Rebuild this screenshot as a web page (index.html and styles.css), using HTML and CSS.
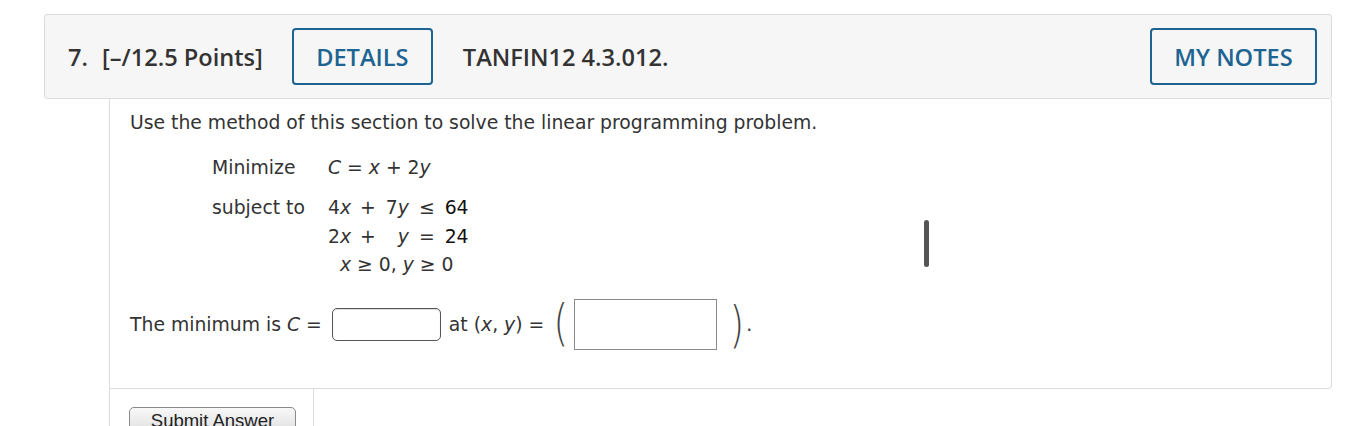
FILE: index.html
```html
<!DOCTYPE html>
<html>
<head>
<meta charset="utf-8">
<link rel="stylesheet" href="styles.css">
</head>
<body>
<div class="question">
  <div class="q-header">
    <div class="q-title"><span class="q-num">7.</span><span>[–/12.5 Points]</span></div>
    <button class="btn-outline details">DETAILS</button>
    <div class="q-code">TANFIN12 4.3.012.</div>
    <div class="spacer"></div>
    <button class="btn-outline notes">MY NOTES</button>
  </div>
  <div class="q-body">
    <p class="intro">Use the method of this section to solve the linear programming problem.</p>
    <table class="lp">
      <tr class="row-min">
        <td class="lbl">Minimize</td>
        <td><i>C</i> = <i>x</i> + 2<i>y</i></td>
      </tr>
      <tr class="row-st">
        <td class="lbl">subject to</td>
        <td>
          <table class="cons">
            <tr><td>4<i>x</i></td><td class="op">+</td><td class="r">7<i>y</i></td><td class="op">≤</td><td class="num">64</td></tr>
            <tr><td>2<i>x</i></td><td class="op">+</td><td class="r"><i>y</i></td><td class="op">=</td><td class="num">24</td></tr>
            <tr><td colspan="5" class="nonneg"><i>x</i> ≥ 0, <i>y</i> ≥ 0</td></tr>
          </table>
        </td>
      </tr>
    </table>
    <div class="answer">
      <span>The minimum is <i>C</i> =</span>
      <span class="box1"></span>
      <span>at (<i>x</i>, <i>y</i>) =</span>
      <span class="paren lp-open">(</span>
      <span class="box2"></span>
      <span class="paren">)</span><span class="dot">.</span>
    </div>
    <div class="cursor"></div>
  </div>
  <div class="q-footer">
    <div class="submit-cell"><button class="submit">Submit Answer</button></div>
  </div>
</div>
</body>
</html>
```
FILE: styles.css
```css
html, body { margin: 0; padding: 0; background: #fff; }
body { padding: 14px 24px 0 44px; overflow: hidden; height: 426px; box-sizing: border-box; }
.question { width: 1288px; }
.q-header {
  display: flex; align-items: center;
  height: 85px; box-sizing: border-box;
  background: #f6f6f6; border: 1px solid #dcdcdc; border-radius: 3px;
  padding: 0 14px 0 23px;
  font-family: "Open Sans", sans-serif; font-weight: 600; font-size: 23.6px; color: #333;
}
.q-title { display: flex; gap: 14px; }
.btn-outline {
  font-family: "Open Sans", sans-serif; font-weight: 600; font-size: 23.6px;
  color: #1d6493; background: #fff0; border: 2px solid #1d6493; border-radius: 4px;
  height: 57px; box-sizing: border-box; padding: 0;
}
.details { margin-left: 29px; width: 141px; }
.q-code { margin-left: 30px; }
.spacer { flex: 1; }
.notes { width: 167px; }
.q-body {
  position: relative;
  margin-left: 65px; height: 290px; box-sizing: border-box;
  border: 1px solid #dcdcdc; border-top: none; border-bottom-right-radius: 4px;
  padding: 12px 20px 0 20px;
  font-family: "DejaVu Sans", Verdana, sans-serif; font-size: 18.8px; color: #333;
}
.intro { margin: 0; line-height: 24px; }
.lp { border-collapse: collapse; margin: 22px 0 0 82px; }
.lp td { padding: 0; vertical-align: top; }
.lp .lbl { width: 116px; }
.row-min td { height: 40px; }
.cons { border-collapse: collapse; }
.cons td { padding: 0; height: 28.5px; vertical-align: top; white-space: nowrap; }
.cons .op { padding: 0 10px; text-align: center; }
.cons .op:nth-child(2) { padding: 0 10px 0 9px; }
.cons .r { text-align: right; min-width: 22px; }
.cons .num { color: #111; }
.cons .nonneg { padding-left: 12px; }
.answer {
  display: flex; align-items: center; margin-top: 12px; height: 60px;
}
.box1 {
  display: inline-block; width: 109px; height: 33px; box-sizing: border-box;
  border: 1px solid #555; border-radius: 5px; margin: 0 8px 0 10px;
  box-shadow: inset 0 1px 1px #ddd;
}
.paren {
  font-family: "DejaVu Sans", sans-serif; font-weight: 200; font-size: 50px; line-height: 1;
  color: #444; transform: scaleX(0.75); display: inline-block;
}
.lp-open { margin: -4px 0 0 7px; }
.box2 {
  display: inline-block; width: 143px; height: 51px; box-sizing: border-box;
  border: 1px solid #8a8a8a; margin: 0 10px 0 3px;
}
.dot { margin-left: 0; }
.cursor {
  position: absolute; left: 814px; top: 121px;
  width: 5px; height: 47px; background: #555; border-radius: 3px;
}
.q-footer { margin-left: 65px; margin-top: -1px; }
.submit-cell {
  width: 205px; height: 60px; box-sizing: border-box;
  border-left: 1px solid #dcdcdc; border-right: 1px solid #dcdcdc; border-top: 1px solid #f0f0f0;
  background: #fff; padding: 18px 0 0 19px;
}
.submit {
  font-family: "Liberation Sans", Arial, sans-serif; font-size: 18.5px; color: #222;
  width: 167px; height: 28px; padding: 0;
  border: 1px solid #8a8a8a; border-radius: 5px;
  background: linear-gradient(#f8f8f8, #dedede);
}
```
